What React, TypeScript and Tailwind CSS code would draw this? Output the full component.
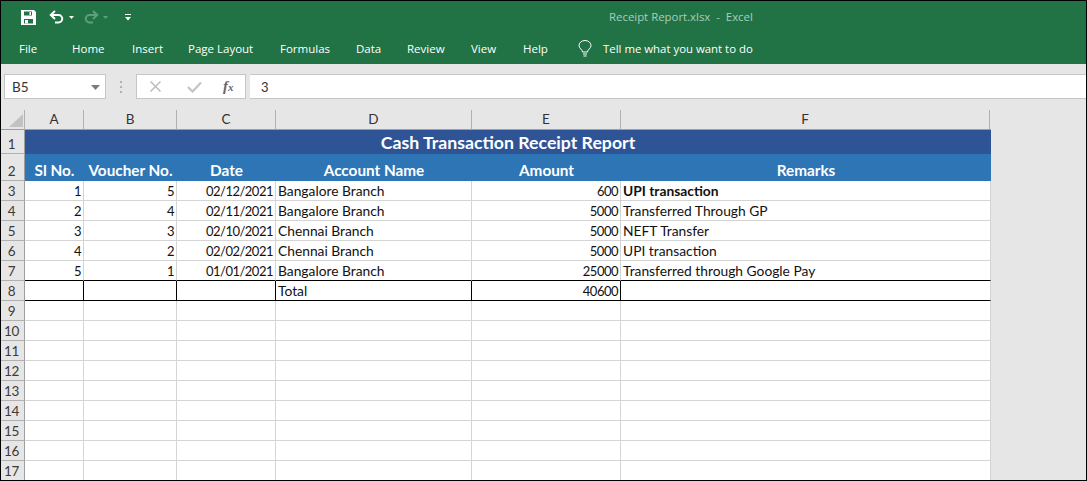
import React from "react";

const cols = ["A", "B", "C", "D", "E", "F"];
const gridCols = "grid grid-cols-[24px_59px_93px_99px_196px_149px_370px] w-[990px]";

const rows: [string, string, string, string, string, string][] = [
  ["1", "5", "02/12/2021", "Bangalore Branch", "600", "UPI transaction"],
  ["2", "4", "02/11/2021", "Bangalore Branch", "5000", "Transferred Through GP"],
  ["3", "3", "02/10/2021", "Chennai Branch", "5000", "NEFT Transfer"],
  ["4", "2", "02/02/2021", "Chennai Branch", "5000", "UPI transaction"],
  ["5", "1", "01/01/2021", "Bangalore Branch", "25000", "Transferred through Google Pay"],
];

const tabs: [string, string][] = [
  ["File", "w-[53px]"],
  ["Home", "w-[60px]"],
  ["Insert", "w-[56px]"],
  ["Page Layout", "w-[92px]"],
  ["Formulas", "w-[76px]"],
  ["Data", "w-[51px]"],
  ["Review", "w-[64px]"],
  ["View", "w-[52px]"],
  ["Help", "w-[55px]"],
];

function RowHead({ n, h = "h-5" }: { n: number; h?: string }) {
  return (
    <div className={`${h} bg-[#e6e6e6] border-r border-b border-b-[#b1b1b1] border-r-[#9f9f9f] flex items-end justify-center text-[13.5px] leading-[18px] text-[#3f3a36] pr-[2px] tracking-[-0.3px]`}>
      {n}
    </div>
  );
}

function Cell({ children, align = "left", black = false, bold = false, blackBottomOnly = false, num = false }: { children?: React.ReactNode; align?: "left" | "right"; black?: boolean; bold?: boolean; blackBottomOnly?: boolean; num?: boolean }) {
  return (
    <div
      className={`h-5 bg-white border-r border-b flex items-end whitespace-nowrap overflow-hidden px-[2px] leading-[18px] text-[#111] ${num ? "text-[13px] tracking-[-0.5px]" : "text-[13.8px]"} ${align === "right" ? "justify-end" : "justify-start"} ${black ? "border-black" : blackBottomOnly ? "border-r-[#d4d4d4] border-b-black" : "border-[#d4d4d4]"} ${bold ? "font-bold" : ""}`}
    >
      {children}
    </div>
  );
}

export default function App() {
  return (
    <div className="w-[1087px] h-[481px] overflow-hidden border border-black bg-[#e6e6e6] flex flex-col font-['Lato','Liberation_Sans',sans-serif]">
      {/* Title bar + ribbon */}
      <div className="h-[63px] shrink-0 bg-[#217346] text-white flex flex-col font-['Open_Sans','Liberation_Sans',sans-serif]">
        <div className="h-[32px] relative flex items-center pl-[20px]">
          <svg width="15" height="15" viewBox="0 0 15 15" className="shrink-0">
            <path fillRule="evenodd" fill="#fff" d="M0 0h13l2 2v13H0zM3 1.500v4h8v-4zM3 9v4.500h9V9z" />
            <rect x="8.500" y="2" width="1.500" height="3" fill="#fff" />
            <rect x="4" y="10" width="3" height="3.500" fill="#fff" />
          </svg>
          <svg width="16" height="14" viewBox="0 0 16 14" className="ml-[13px] shrink-0" fill="none" stroke="#fff" strokeWidth="2">
            <path d="M6 1L1.800 5 6 9" />
            <path d="M2 5h7.500a3.700 3.700 0 0 1 0 7.500H6" />
          </svg>
          <svg width="5" height="3" viewBox="0 0 5 3" className="ml-[4px] shrink-0"><path d="M0 0h5L2.500 3z" fill="#fff" /></svg>
          <svg width="16" height="14" viewBox="0 0 16 14" className="ml-[9px] shrink-0" fill="none" stroke="#5f9f7e" strokeWidth="2">
            <path d="M10 1l4.200 4L10 9" />
            <path d="M14 5H6.500a3.700 3.700 0 0 0 0 7.500H10" />
          </svg>
          <svg width="5" height="3" viewBox="0 0 5 3" className="ml-[4px] shrink-0"><path d="M0 0h5L2.500 3z" fill="#5f9f7e" /></svg>
          <svg width="6" height="7" viewBox="0 0 6 7" className="ml-[17px] shrink-0"><path d="M0 0h6v1H0zM0 3h6L3 6.500z" fill="#fff" /></svg>
          <div className="absolute left-[608px] top-[7px] text-[11.4px] leading-[18px] text-[#a9cdb8] whitespace-pre">Receipt Report.xlsx  -  Excel</div>
        </div>
        <div className="h-[31px] flex items-start pl-[18px] text-[11.5px] leading-[32px] text-white">
          {tabs.map(([t, w]) => (
            <div key={t} className={`${w} shrink-0`}>{t}</div>
          ))}
          <svg width="14" height="17" viewBox="0 0 14 17" className="shrink-0 mt-[7px]" fill="none" stroke="#fff" strokeWidth="1">
            <path d="M4.500 12C4.500 9.500 1 8.500 1 5.500a6 5 0 0 1 12 0C13 8.500 9.500 9.500 9.500 12z" />
            <path d="M5 14h4M5.500 16h3" />
          </svg>
          <div className="ml-[11px] whitespace-nowrap text-[11.4px]">Tell me what you want to do</div>
        </div>
      </div>

      {/* Formula bar */}
      <div className="h-[46px] shrink-0 flex items-start pt-[10px] pl-[3px] text-[14px] text-[#333]">
        <div className="w-[102px] h-[25px] bg-white border border-[#c6c6c6] flex items-center justify-between pl-[7px] pr-[5px] pt-[2px] text-[13.5px] font-['Lato',sans-serif]">
          <span>B5</span>
          <svg width="9" height="5" viewBox="0 0 9 5"><path d="M0 0h9L4.500 5z" fill="#7b7b7b" /></svg>
        </div>
        <div className="w-[30px] h-[25px] flex flex-col items-center justify-center gap-[3px]">
          <div className="w-[2px] h-[2px] bg-[#b0b0b0]" />
          <div className="w-[2px] h-[2px] bg-[#b0b0b0]" />
          <div className="w-[2px] h-[2px] bg-[#b0b0b0]" />
        </div>
        <div className="w-[110px] h-[25px] bg-white border border-[#c6c6c6] flex items-center pl-[13px]">
          <svg width="11" height="11" viewBox="0 0 11 11" fill="none" stroke="#bdbdbd" strokeWidth="1.500"><path d="M.5.500l10 10M10.500.500l-10 10" /></svg>
          <svg width="15" height="12" viewBox="0 0 15 12" className="ml-[26px]" fill="none" stroke="#c4c4c4" strokeWidth="2.200"><path d="M1 6l4.500 4.500L14 1.500" /></svg>
          <span className="ml-[21px] font-['Liberation_Serif',serif] italic font-bold text-[15px] text-[#666] leading-none">f<span className="text-[11px]">x</span></span>
        </div>
        <div className="w-[4px]" />
        <div className="flex-1 h-[25px] bg-white border-y border-[#c6c6c6] flex items-center pl-[11px] pt-[2px] text-[13px] font-['Lato',sans-serif]">3</div>
      </div>

      {/* Sheet */}
      <div className="flex-1 min-h-0 overflow-hidden">
        <div className={gridCols}>
          {/* Column headers */}
          <div className="h-[20px] border-r border-b border-r-[#b1b1b1] border-b-[#9f9f9f] flex items-end justify-end pr-[1px] pb-[2px]">
            <svg width="14" height="13" viewBox="0 0 14 13"><path d="M14 0v13H0z" fill="#c2c2c2" /></svg>
          </div>
          {cols.map((c) =>
            c === "F" ? (
              <div key={c} className="h-[20px] border-b border-b-[#9f9f9f] pr-[1px]">
                <div className="h-full border-r border-r-[#b1b1b1] flex items-center justify-center text-[13.5px] text-[#333]">{c}</div>
              </div>
            ) : (
              <div key={c} className="h-[20px] border-r border-b border-r-[#b1b1b1] border-b-[#9f9f9f] flex items-center justify-center text-[13.5px] text-[#333]">{c}</div>
            )
          )}

          {/* Row 1 */}
          <RowHead n={1} h="h-[24px]" />
          <div className="col-span-6 h-[24px] bg-[#2f5496] flex items-center justify-center pt-[2px] text-white font-bold text-[17.7px]">
            Cash Transaction Receipt Report
          </div>

          {/* Row 2 */}
          <RowHead n={2} h="h-[27px]" />
          {["Sl No.", "Voucher No.", "Date", "Account Name", "Amount", "Remarks"].map((t) => (
            <div key={t} className="h-[27px] bg-[#2e75b6] flex items-end justify-center text-white font-bold text-[15.3px] leading-[21px] whitespace-nowrap">{t}</div>
          ))}

          {/* Rows 3-7 */}
          {rows.map((r, i) => (
            <React.Fragment key={i}>
              <RowHead n={i + 3} />
              <Cell num align="right" blackBottomOnly={i === 4}>{r[0]}</Cell>
              <Cell num align="right" blackBottomOnly={i === 4}>{r[1]}</Cell>
              <Cell num align="right" blackBottomOnly={i === 4}>{r[2]}</Cell>
              <Cell blackBottomOnly={i === 4}>{r[3]}</Cell>
              <Cell num align="right" blackBottomOnly={i === 4}>{r[4]}</Cell>
              <Cell bold={i === 0} blackBottomOnly={i === 4}>{r[5]}</Cell>
            </React.Fragment>
          ))}

          {/* Row 8 */}
          <RowHead n={8} />
          <Cell black />
          <Cell black />
          <Cell black />
          <Cell black>Total</Cell>
          <Cell black num align="right">40600</Cell>
          <div className="h-5 bg-white border-r border-b border-r-[#d4d4d4] border-b-black" />

          {/* Rows 9-17 */}
          {[9, 10, 11, 12, 13, 14, 15, 16, 17].map((n) => (
            <React.Fragment key={n}>
              <RowHead n={n} />
              {cols.map((c) => (
                <div key={c} className="h-5 bg-white border-r border-b border-[#d4d4d4]" />
              ))}
            </React.Fragment>
          ))}
        </div>
      </div>
    </div>
  );
}
